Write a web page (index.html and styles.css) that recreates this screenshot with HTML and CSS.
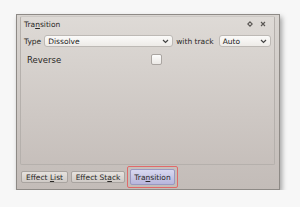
FILE: index.html
```html
<!DOCTYPE html>
<html lang="en">
<head>
    <meta charset="UTF-8">
    <title>Transition</title>
    <link rel="stylesheet" href="styles.css">
</head>
<body>
    <div class="window">
        <div class="panel">
            <div class="header">
                <span class="title">Tra<u>n</u>sition</span>
                <span class="tools">
                    <svg width="6" height="6" viewBox="0 0 6 6"><path d="M3 0.8 L5.2 3 L3 5.2 L0.8 3 Z" fill="none" stroke="#5a5754" stroke-width="1.1"/></svg>
                    <svg width="6" height="6" viewBox="0 0 6 6"><path d="M1 1 L5 5 M5 1 L1 5" stroke="#5a5754" stroke-width="1.1"/></svg>
                </span>
            </div>
            <div class="row">
                <span class="label">Type</span>
                <div class="combo wide">
                    <span>Dissolve</span>
                    <svg width="7" height="5" viewBox="0 0 7 5"><path d="M1 1 L3.5 3.5 L6 1" fill="none" stroke="#444" stroke-width="1.2"/></svg>
                </div>
                <span class="label">with track</span>
                <div class="combo small">
                    <span>Auto</span>
                    <svg width="7" height="5" viewBox="0 0 7 5"><path d="M1 1 L3.5 3.5 L6 1" fill="none" stroke="#444" stroke-width="1.2"/></svg>
                </div>
            </div>
            <div class="row reverse">
                <span class="rev-label">Reverse</span>
                <span class="checkbox"></span>
            </div>
        </div>
        <div class="tabs">
            <div class="tab t1">Effect&nbsp;<u>L</u>ist</div>
            <div class="tab t2">Effect St<u>a</u>ck</div>
            <div class="active-wrap">
                <div class="tab active">Tra<u>n</u>sition</div>
            </div>
        </div>
    </div>
</body>
</html>
```

FILE: styles.css
```css
body {
    margin: 0;
    background: #f7f7f7;
    font-family: 'DejaVu Sans', sans-serif;
    font-size: 7.5px;
    color: #2a2826;
    white-space: nowrap;
}
.window {
    margin: 14px 0 0 16px;
    width: 264px;
    height: 176px;
    box-sizing: border-box;
    border: 1px solid #8e8a86;
    background: linear-gradient(#d9d5d1, #c3bcb8);
    box-shadow: 2px 3px 5px rgba(0, 0, 0, 0.35);
    padding: 1px 4px 0 3px;
    display: flex;
    flex-direction: column;
}
.panel {
    flex: 1;
    border: 1px solid #b5b0ac;
    border-top-color: #ccc8c4;
    border-radius: 2px;
    padding: 0 3px;
    background: linear-gradient(#dedad6, #c6bfbb);
}
.header {
    height: 12px;
    display: flex;
    align-items: center;
    justify-content: space-between;
    margin-top: 1px;
}
.tools {
    display: flex;
    gap: 7px;
    margin-right: 5px;
}
.row {
    display: flex;
    align-items: center;
    margin-top: 5px;
    height: 12px;
}
.label {
    margin-right: 3px;
    flex-shrink: 0;
}
.combo {
    flex-shrink: 0;
    box-sizing: border-box;
    height: 12px;
    border: 1px solid #bdb9b5;
    border-radius: 3px;
    background: linear-gradient(#fbfaf9, #eeebe8);
    display: flex;
    align-items: center;
    justify-content: space-between;
    padding: 0 3px 0 3px;
    color: #222;
}
.combo.wide {
    width: 129px;
    margin-right: 3px;
}
.combo.small {
    width: 52px;
    margin-left: 2px;
}
.reverse {
    margin-top: 7px;
    height: 11px;
}
.rev-label {
    font-size: 8.5px;
    margin-left: 3px;
    width: 124px;
}
.checkbox {
    width: 11px;
    height: 11px;
    box-sizing: border-box;
    border: 1px solid #aaa5a1;
    border-radius: 2px;
    background: linear-gradient(#fdfdfc, #ebe8e5);
}
.tabs {
    height: 24px;
    display: flex;
    align-items: center;
    padding-left: 1px;
}
.tab {
    flex-shrink: 0;
    box-sizing: border-box;
    height: 12px;
    border: 1px solid #a9a4a0;
    border-radius: 2px;
    background: linear-gradient(#e6e2de, #cfcac6);
    display: flex;
    align-items: center;
    justify-content: center;
}
.t1 {
    width: 47px;
    margin-right: 3px;
}
.t2 {
    width: 54px;
    margin-right: 2px;
}
.active-wrap {
    box-sizing: border-box;
    width: 51px;
    height: 22px;
    border: 1px solid #e06a6a;
    border-radius: 2px;
    padding: 2px;
    display: flex;
}
.tab.active {
    flex: 1;
    height: 16px;
    border-color: #9a98c0;
    background: linear-gradient(#d8d8f0, #b8b6dc);
}
u {
    text-decoration-thickness: 1px;
    text-underline-offset: 1px;
}
```
